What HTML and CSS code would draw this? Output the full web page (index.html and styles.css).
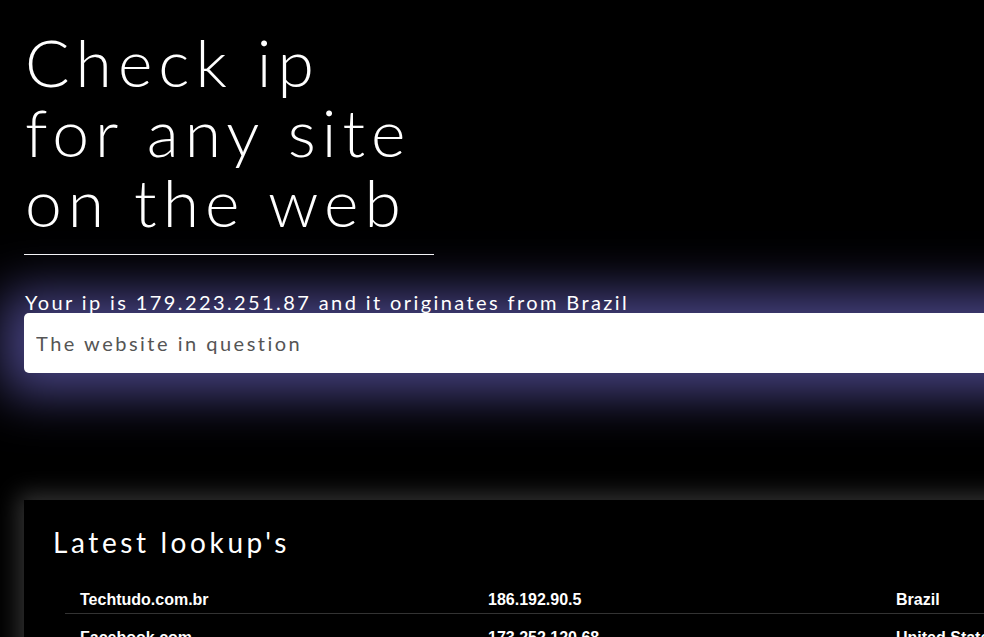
FILE: index.html
```html
<!DOCTYPE html>
<html lang="en">
<head>
  <meta charset="UTF-8">
  <title>Check ip</title>
  <link rel="stylesheet" href="styles.css">
</head>
<body>
  <div class="page">
    <h1 class="headline">Check ip<br>for any site<br>on the web</h1>

    <p class="your-ip">Your ip is 179.223.251.87 and it originates from Brazil</p>
    <input type="text" class="site-input" placeholder="The website in question" />

    <div class="lookups">
      <h2>Latest lookup's</h2>
      <table class="lookup-table">
        <tr>
          <td>Techtudo.com.br</td>
          <td>186.192.90.5</td>
          <td>Brazil</td>
        </tr>
        <tr>
          <td>Facebook.com</td>
          <td>173.252.120.68</td>
          <td>United States</td>
        </tr>
        <tr>
          <td>Google.com</td>
          <td>173.194.42.8</td>
          <td>United States</td>
        </tr>
      </table>
    </div>
  </div>
</body>
</html>
```

FILE: styles.css
```css
html, body {
  margin: 0;
  background-color: #000;
  overflow: hidden;
}

body {
  font-family: 'Lato', 'Open Sans', sans-serif;
  color: #fff;
}

.page {
  padding: 0 0 0 24px;
  width: 1500px;
}

.headline {
  margin: 0;
  padding: 27px 0 17px 1px;
  width: 409px;
  font-size: 66px;
  font-weight: 300;
  line-height: 70px;
  letter-spacing: 6px;
  border-bottom: 1px solid #fff;
}

.your-ip {
  margin: 36px 0 0 1px;
  font-size: 20px;
  line-height: 22px;
  letter-spacing: 2.4px;
}

.site-input {
  display: block;
  box-sizing: border-box;
  width: 1400px;
  height: 60px;
  margin: 0;
  padding: 0 12px;
  border: none;
  border-radius: 5px;
  background: #fff;
  font-family: 'Lato', sans-serif;
  font-size: 20px;
  letter-spacing: 2.5px;
  color: #333;
  box-shadow: 0 0 50px 22px rgba(74, 70, 135, 0.95);
}

.site-input::placeholder {
  color: #555;
}

.lookups {
  margin-top: 127px;
  width: 1400px;
  padding: 25px 0 0 29px;
  background: #000;
  box-shadow: 0 0 22px 6px rgba(255, 255, 255, 0.2);
  height: 200px;
}

.lookups h2 {
  margin: 0;
  font-size: 28px;
  font-weight: 400;
  line-height: 34px;
  letter-spacing: 3.6px;
}

.lookup-table {
  margin: 25px 0 0 12px;
  border-collapse: collapse;
  font-family: 'Liberation Sans', Arial, sans-serif;
  font-weight: bold;
  font-size: 16px;
}

.lookup-table td {
  padding: 7px 15px 4px;
  width: 378px;
  border-bottom: 1px solid #333;
}

.lookup-table tr + tr td {
  padding-top: 15px;
}
```
